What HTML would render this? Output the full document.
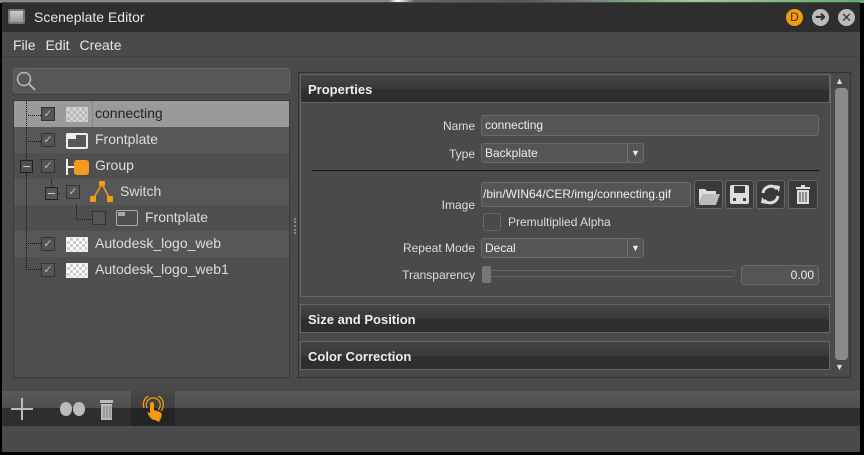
<!DOCTYPE html><html><head><style>
*{box-sizing:border-box;margin:0;padding:0}
body{width:864px;height:455px;background:#000;font-family:"Liberation Sans",sans-serif;font-size:13px;color:#ddd;position:relative;overflow:hidden}
.a{position:absolute}
.win{left:2px;top:2px;width:858px;height:450px;background:#4a4a4a}
.row{position:absolute;left:14px;width:275px;height:26px;font-size:14px;line-height:26px}
.cb{position:absolute;width:14px;height:14px;border:1px solid #333;background:#555;color:#bbb;font-size:11px;line-height:12px;text-align:center}
.chk{background-image:linear-gradient(45deg,#ccc 25%,transparent 25%,transparent 75%,#ccc 75%),linear-gradient(45deg,#ccc 25%,#fff 25%,#fff 75%,#ccc 75%);background-size:6px 6px;background-position:0 0,3px 3px;border:1px solid #eee}
.hdr{position:absolute;left:300px;width:530px;height:29px;background:linear-gradient(#444,#3a3a3a 50%,#2e2e2e 55%,#2e2e2e);border:1px solid #666;font-weight:bold;font-size:13px;line-height:29px;padding-left:7px;color:#eee}
.lbl{position:absolute;right:389px;font-size:12px;color:#ddd;text-align:right}
.fld{position:absolute;background:#555;border:1px solid #6a6a6a;border-radius:3px;font-size:12px;line-height:18px;padding-left:3px;color:#eee}
.btn{position:absolute;top:180px;width:29px;height:29px;background:#3a3a3a;border:1px solid #666;border-radius:3px}
</style></head><body>
<div class="a" style="left:0;top:0;width:864px;height:3px;background:linear-gradient(90deg,#888 0,#888 45%,#fff 46%,#666 48%,#555 60%,#9c9 80%,#6a6 100%)"></div>
<div class="a win"></div>
<div class="a" style="left:2px;top:3px;width:858px;height:29px;background:#2e2e2e"></div>
<div class="a" style="left:8px;top:9px;width:17px;height:15px;border:2px solid #777;background:linear-gradient(#ccc,#999);border-radius:2px"></div>
<div class="a" style="left:34px;top:9px;font-size:14px;color:#e6e6e6">Sceneplate Editor</div>
<div class="a" style="left:786px;top:9px;width:17px;height:17px;border-radius:50%;background:#f39a10;color:#333;font-size:12px;text-align:center;line-height:17px">D</div>
<div class="a" style="left:812px;top:9px;width:17px;height:17px;border-radius:50%;background:#bbb;color:#333;font-size:13px;text-align:center;line-height:16px;font-weight:bold">➜</div>
<div class="a" style="left:838px;top:9px;width:17px;height:17px;border-radius:50%;background:#bbb;color:#333;font-size:13px;text-align:center;line-height:17px">✕</div>
<div class="a" style="left:2px;top:56px;width:858px;height:1px;background:#404040"></div>
<div class="a" style="left:13px;top:37px;font-size:14px;color:#e6e6e6;word-spacing:6px">File Edit Create</div>
<div class="a" style="left:13px;top:68px;width:277px;height:25px;background:#575757;border:1px solid #666;border-radius:3px"></div>
<svg class="a" style="left:15px;top:70px" width="22" height="22"><circle cx="9" cy="9" r="6.5" stroke="#bbb" stroke-width="1.5" fill="none"/><line x1="14" y1="14" x2="20" y2="20" stroke="#bbb" stroke-width="1.7"/></svg>
<div class="a" style="left:13px;top:100px;width:277px;height:278px;background:#4e4e4e;border:1px solid #3a3a3a"></div>
<div class="row" style="top:101px;background:#9a9a9a;color:#222"></div>
<div class="row" style="top:127px;background:#575757"></div>
<div class="row" style="top:153px;background:#4f4f4f"></div>
<div class="row" style="top:179px;background:#575757"></div>
<div class="row" style="top:205px;background:#4f4f4f"></div>
<div class="row" style="top:231px;background:#575757"></div>
<div class="row" style="top:257px;background:#4f4f4f"></div>
<svg class="a" style="left:14px;top:101px" width="100" height="180">
<g stroke="#111" stroke-dasharray="1,1" fill="none">
<line x1="12.5" y1="0" x2="12.5" y2="168"/><line x1="12" y1="14.5" x2="27" y2="14.5"/><line x1="12" y1="40.5" x2="27" y2="40.5"/>
<line x1="12" y1="142.5" x2="27" y2="142.5"/><line x1="12" y1="168.5" x2="27" y2="168.5"/>
<line x1="37.5" y1="78" x2="37.5" y2="92"/><line x1="39" y1="92.5" x2="46" y2="92.5"/>
<line x1="62.5" y1="104" x2="62.5" y2="118"/><line x1="62" y1="118.5" x2="77" y2="118.5"/>
</g>
<rect x="6.5" y="59.5" width="12" height="12" fill="#4f4f4f" stroke="#222"/><line x1="9" y1="65.5" x2="16" y2="65.5" stroke="#ccc"/>
<rect x="31.5" y="86.5" width="12" height="12" fill="#575757" stroke="#222"/><line x1="34" y1="92.5" x2="41" y2="92.5" stroke="#ccc"/>
</svg>
<div class="cb" style="left:41px;top:107px">✓</div>
<div class="cb" style="left:41px;top:133px">✓</div>
<div class="cb" style="left:41px;top:159px">✓</div>
<div class="cb" style="left:66px;top:185px">✓</div>
<div class="cb" style="left:92px;top:211px"></div>
<div class="cb" style="left:41px;top:237px">✓</div>
<div class="cb" style="left:41px;top:263px">✓</div>
<div class="a chk" style="left:66px;top:107px;width:22px;height:15px;opacity:.6"></div>
<div class="a" style="left:66px;top:133px;width:22px;height:16px;border:2px solid #eee;border-radius:2px"><div style="width:8px;height:4px;background:#eee"></div></div>
<svg class="a" style="left:65px;top:158px" width="26" height="18"><line x1="2" y1="1" x2="2" y2="17" stroke="#eee" stroke-width="2"/><line x1="2" y1="9" x2="10" y2="9" stroke="#eee" stroke-width="2"/><rect x="9" y="2" width="15" height="15" rx="3" fill="#f39a1f"/></svg>
<svg class="a" style="left:88px;top:181px" width="28" height="22"><path d="M14 3 L5 18 M14 3 L22 18" stroke="#f39a1f" stroke-width="1.5" fill="none"/><rect x="11" y="0" width="6" height="5" rx="1" fill="#f39a1f"/><rect x="2" y="15" width="6" height="6" rx="1" fill="#f39a1f"/><rect x="19" y="15" width="6" height="6" rx="1" fill="#f39a1f"/></svg>
<div class="a" style="left:116px;top:210px;width:22px;height:16px;border:1px solid #aaa;border-radius:2px"><div style="width:7px;height:4px;background:#aaa;margin:1px"></div></div>
<div class="a chk" style="left:66px;top:237px;width:22px;height:15px"></div>
<div class="a chk" style="left:66px;top:263px;width:22px;height:15px"></div>
<div class="a" style="left:92px;top:101px;width:198px;height:26px;border-left:1px solid #888"></div>
<div class="a" style="left:95px;top:105px;font-size:14px;color:#222">connecting</div>
<div class="a" style="left:95px;top:131px;font-size:14px">Frontplate</div>
<div class="a" style="left:95px;top:157px;font-size:14px">Group</div>
<div class="a" style="left:120px;top:183px;font-size:14px">Switch</div>
<div class="a" style="left:145px;top:209px;font-size:14px">Frontplate</div>
<div class="a" style="left:95px;top:235px;font-size:14px">Autodesk_logo_web</div>
<div class="a" style="left:95px;top:261px;font-size:14px">Autodesk_logo_web1</div>
<div class="a" style="left:294px;top:218px;width:2px;height:16px;border-left:2px dotted #888"></div>
<div class="a" style="left:298px;top:72px;width:553px;height:306px;border:1px solid #333;background:#4a4a4a"></div>
<div class="a" style="left:300px;top:75px;width:531px;height:222px;border:1px solid #666;background:#4a4a4a"></div>
<div class="hdr" style="top:74px">Properties</div>
<div class="lbl" style="top:119px">Name</div>
<div class="fld" style="left:481px;top:115px;width:338px;height:21px">connecting</div>
<div class="lbl" style="top:147px">Type</div>
<div class="fld" style="left:481px;top:143px;width:163px;height:20px">Backplate<span style="position:absolute;right:0;top:0;width:16px;height:18px;border-left:1px solid #777;font-size:9px;text-align:center">▼</span></div>
<div class="a" style="left:312px;top:170px;width:507px;height:1px;background:#111"></div>
<div class="lbl" style="top:198px">Image</div>
<div class="fld" style="left:481px;top:182px;width:210px;height:25px;line-height:23px;padding-left:1px;overflow:hidden;white-space:nowrap">/bin/WIN64/CER/img/connecting.gif</div>
<div class="btn" style="left:694px"><svg width="27" height="27"><path d="M4 8h6l2 2h9v3H8l-4 10z" fill="#ddd"/><path d="M8 13h17l-4 11H4z" fill="#bbb"/></svg></div>
<div class="btn" style="left:725px"><svg width="27" height="27"><rect x="4" y="4" width="19" height="19" rx="2" fill="#ddd"/><rect x="8" y="5" width="11" height="7" fill="#3a3a3a"/><rect x="7" y="17" width="3" height="3" fill="#3a3a3a"/><rect x="17" y="17" width="3" height="3" fill="#3a3a3a"/></svg></div>
<div class="btn" style="left:756px"><svg width="27" height="27"><path d="M6 12a8 8 0 0 1 14-4" stroke="#ddd" stroke-width="3" fill="none"/><path d="M21 15a8 8 0 0 1-14 4" stroke="#ddd" stroke-width="3" fill="none"/><path d="M17 4l6 1-1 6z M10 23l-6-1 1-6z" fill="#ddd"/></svg></div>
<div class="btn" style="left:788px;width:30px"><svg width="28" height="27"><rect x="8" y="9" width="12" height="14" fill="#ddd"/><rect x="7" y="6" width="14" height="2" fill="#ddd"/><rect x="12" y="4" width="4" height="2" fill="#ddd"/><path d="M11 11v10M14 11v10M17 11v10" stroke="#3a3a3a"/></svg></div>
<div class="a" style="left:483px;top:213px;width:18px;height:18px;border:1px solid #666;border-radius:3px;background:#4a4a4a"></div>
<div class="a" style="left:508px;top:215px;font-size:12px">Premultiplied Alpha</div>
<div class="lbl" style="top:241px">Repeat Mode</div>
<div class="fld" style="left:481px;top:238px;width:163px;height:20px">Decal<span style="position:absolute;right:0;top:0;width:16px;height:18px;border-left:1px solid #777;font-size:9px;text-align:center">▼</span></div>
<div class="lbl" style="top:268px">Transparency</div>
<div class="a" style="left:483px;top:270px;width:252px;height:7px;border:1px solid #666;border-radius:3px;background:#4a4a4a"></div>
<div class="a" style="left:482px;top:266px;width:9px;height:17px;background:#777;border-radius:2px"></div>
<div class="fld" style="left:741px;top:265px;width:78px;height:20px;text-align:right;padding-right:4px">0.00</div>
<div class="hdr" style="top:304px">Size and Position</div>
<div class="hdr" style="top:341px">Color Correction</div>
<div class="a" style="left:835px;top:76px;font-size:9px;color:#ddd">▲</div>
<div class="a" style="left:835px;top:88px;width:13px;height:272px;background:#8a8a8a;border-radius:4px"></div>
<div class="a" style="left:835px;top:362px;font-size:9px;color:#ddd">▼</div>
<div class="a" style="left:2px;top:391px;width:858px;height:17px;background:linear-gradient(#5a5a5a,#4f4f4f)"></div>
<div class="a" style="left:2px;top:408px;width:858px;height:18px;background:#2e2e2e"></div>
<div class="a" style="left:131px;top:391px;width:44px;height:35px;background:rgba(0,0,0,.2)"></div>
<svg class="a" style="left:8px;top:396px" width="160" height="30"><path d="M14 2v22M3 13h22" stroke="#bbb" stroke-width="2"/><ellipse cx="58" cy="13" rx="6" ry="7" fill="#bbb"/><ellipse cx="71" cy="13" rx="6" ry="7" fill="#bbb"/><rect x="93" y="8" width="11" height="16" fill="#bbb"/><rect x="92" y="4" width="13" height="3" fill="#bbb"/><path d="M96 10v12M99 10v12M102 10v12" stroke="#777"/>
<path d="M147 24c-4 0-6-4-8-8l3 1v-9a2 2 0 0 1 4 0v6l6 2c2 1 2 3 1 6l-2 4z" fill="#f39a10"/><path d="M139 12a7 7 0 1 1 11 2M136 12a10 10 0 1 1 17 3" stroke="#f39a10" fill="none" stroke-width="1.3"/></svg>
</body></html>
